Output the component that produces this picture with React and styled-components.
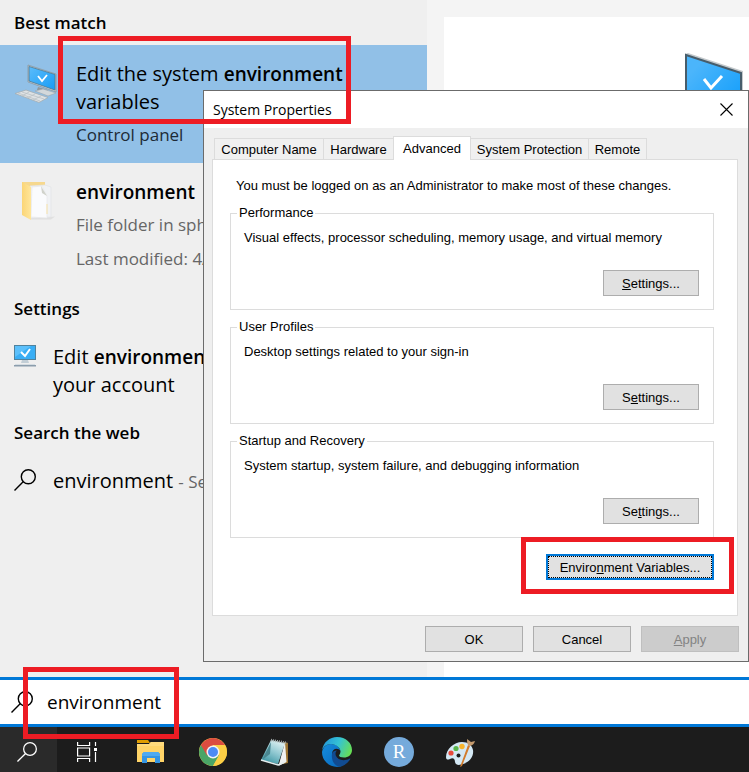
import React, { useState } from 'react'
import styled, { createGlobalStyle } from 'styled-components'

const ui = `'Open Sans', 'Noto Sans', sans-serif`
const classic = `'Liberation Sans', Arial, sans-serif`

const GlobalStyle = createGlobalStyle`
    * {
        box-sizing: border-box;
    }

    body {
        margin: 0;
        background: #efefef;
        color: #000;
        font-family: ${ui};
    }
`

const Screen = styled.div`
    position: relative;
    display: flex;
    flex-direction: column;
    min-height: 100vh;
    overflow: hidden;
`

const Flyout = styled.main`
    flex: 1;
    display: grid;
    grid-template-columns: 427px 1fr;
`

const Results = styled.section`
    padding-top: 1px;
    background: #efefef;
`

const Preview = styled.aside`
    display: flex;
    padding: 17px 0 0 17px;
    background: #f4f4f4;
`

const PreviewCard = styled.div`
    flex: 1;
    display: flex;
    justify-content: flex-end;
    padding: 35px 4px 0 0;
    background: #fff;
`

const Heading = styled.h2`
    margin: 0;
    padding-left: 14px;
    font-size: 17px;
    font-weight: 600;
    line-height: 44px;
`

const Result = styled.a`
    display: flex;
    gap: ${props => props.$large ? 18 : 17}px;
    padding: ${props => props.$large ? '15px 60px 11px 14px' : '12px 60px 12px 14px'};
    background: ${props => props.$selected ? '#91c0e7' : 'transparent'};
    color: #000;
    text-decoration: none;
`

const ResultIcon = styled.span`
    flex: none;
    display: flex;
    justify-content: center;
    align-items: flex-start;
    width: ${props => props.$large ? 44 : 22}px;
    padding-top: ${props => props.$large ? 4 : 2}px;
`

const ResultTitle = styled.div`
    font-size: 20px;
    line-height: 28px;

    b {
        font-size: 19px;
        font-weight: 600;
    }
`

const ResultMeta = styled.div`
    font-size: 17px;
    line-height: 34px;
    color: ${props => props.$strong ? '#1d2a35' : '#666'};

    ${ResultTitle} + & {
        margin-top: 2px;
    }
`

const Muted = styled.span`
    font-size: 17px;
    color: #666;
`

const Dialog = styled.section`
    position: absolute;
    top: 90px;
    left: 203px;
    right: 0;
    border: 1px solid #6b6b6b;
    background: #efefef;
    font-family: ${classic};
    font-size: 13px;
    line-height: 16px;
`

const TitleBar = styled.header`
    display: flex;
    align-items: center;
    justify-content: space-between;
    height: 37px;
    padding: 0 15px 0 9px;
    background: #fff;
`

const DialogTitle = styled.h1`
    margin: 0;
    font-family: ${ui};
    font-size: 14px;
    font-weight: 400;
`

const CloseButton = styled.button`
    display: flex;
    padding: 0;
    border: 0;
    background: none;
`

const DialogBody = styled.div`
    padding: 8px 9px 9px 8px;
`

const Tabs = styled.div`
    display: flex;
    align-items: flex-end;
    height: 23px;
    padding-left: 2px;
`

const Tab = styled.button`
    position: relative;
    flex: 0 0 ${props => props.$width}px;
    height: ${props => props.$active ? 24 : 21}px;
    margin: 0 0 ${props => props.$active ? -1 : 0}px -1px;
    padding: ${props => props.$active ? 0 : 2}px 0 0;
    border: 1px solid #dcdcdc;
    border-bottom: 0;
    background: ${props => props.$active ? '#fff' : '#f0f0f0'};
    font: inherit;
    color: #000;
    white-space: nowrap;

    &:first-child {
        margin-left: 0;
    }
`

const Panel = styled.div`
    margin-right: 1px;
    padding: 18px 23px 35px 17px;
    border: 1px solid #dcdcdc;
    background: #fff;
`

const Note = styled.p`
    margin: 0 0 11px 6px;
    white-space: nowrap;
`

const Group = styled.fieldset`
    min-width: 0;
    margin: 0 0 9px;
    padding: 9px 14px 13px 13px;
    border: 1px solid #dcdcdc;

    &:last-of-type {
        margin-bottom: 16px;
    }
`

const Legend = styled.legend`
    margin-left: -7px;
    padding: 0 2px;
`

const GroupText = styled.p`
    margin: 0 0 24px;
    white-space: nowrap;
`

const ButtonRow = styled.div`
    display: flex;
    justify-content: flex-end;
    gap: 10px;
`

const Footer = styled(ButtonRow)`
    padding-top: 10px;
`

const Button = styled.button`
    width: ${props => props.$width}px;
    height: 26px;
    padding: 2px 0 0;
    border: 1px solid #adadad;
    background: #e1e1e1;
    font: inherit;
    color: #000;

    &:disabled {
        border-color: #bfbfbf;
        background: #ccc;
        color: #838383;
    }
`

const DefaultButton = styled(Button)`
    border: 2px solid #0078d7;
    outline: 1px dotted #000;
    outline-offset: -3px;
`

const SearchBar = styled.label`
    display: flex;
    align-items: center;
    gap: 14px;
    height: 50px;
    padding-left: 11px;
    border: solid #0078d7;
    border-width: 3px 0;
    background: #fff;
`

const SearchInput = styled.input`
    flex: 1;
    min-width: 0;
    padding: 0;
    border: 0;
    outline: 0;
    background: none;
    font-family: ${ui};
    font-size: 19px;
    color: #000;
`

const Taskbar = styled.nav`
    display: flex;
    height: 45px;
    background: #1c1c1c;
`

const TaskButton = styled.button`
    display: flex;
    align-items: center;
    justify-content: center;
    width: 62px;
    padding: 4px 0 0;
    border: 0;
    background: transparent;
`

const SearchTaskButton = styled(TaskButton)`
    width: 57px;
    margin-right: 1px;
    padding: 4px 4px 0 0;
    background: #2a2a2a;
`

// red outlines that point out the steps
const Highlight = styled.div`
    position: absolute;
    border: 5px solid #ed1c24;
    pointer-events: none;
`

const ResultHighlight = styled(Highlight)`
    top: 36px;
    left: 58px;
    width: 293px;
    height: 88px;
`

const ButtonHighlight = styled(Highlight)`
    top: 537px;
    right: 15px;
    width: 213px;
    height: 57px;
`

const SearchHighlight = styled(Highlight)`
    bottom: 33px;
    left: 23px;
    width: 156px;
    height: 72px;
`

const SearchIcon = ({ color = '#000', size = 22 }) => (
    <svg width={size} height={size} viewBox='0 0 22 22' fill='none' stroke={color} strokeWidth='1.4'>
        <circle cx='14.3' cy='7.7' r='7' />
        <path d='M9.4 12.6L.5 21.5' />
    </svg>
)

const SystemIcon = () => (
    <svg width='44' height='42' viewBox='0 0 44 42'>
        <defs>
            <linearGradient id='sysBlue' x1='0' y1='0' x2='1' y2='1'>
                <stop offset='0' stopColor='#5cbcfb' />
                <stop offset='1' stopColor='#169cf5' />
            </linearGradient>
        </defs>
        <path d='M24 23l10 3-1 4-10-4z' fill='#8f979c' />
        <path d='M21 27l8-2 13 4-8 3z' fill='#d3d8db' stroke='#9aa5ac' strokeWidth='.6' />
        <path d='M14 1l28 9v18L14 18z' fill='#c3cbd0' stroke='#8b989f' strokeWidth='.8' />
        <path d='M15 2.500l26 8V26L15 17z' fill='url(#sysBlue)' stroke='#4b7a96' strokeWidth='.8' />
        <path d='M24 12l4 5 5-6' fill='none' stroke='#fff' strokeWidth='1.800' />
        <path d='M1 29.500l11-3.500 22 7.500-9 5z' fill='#dfe2e4' stroke='#a4adb2' strokeWidth='.8' />
        <path d='M4 29l22 8M8 28l22 7M8 32l7-4M13 34l8-4M19 36l8-4' stroke='#b6bec3' strokeWidth='.7' />
    </svg>
)

const FolderPageIcon = () => (
    <svg width='44' height='42' viewBox='0 0 44 42'>
        <defs>
            <linearGradient id='folderSide' x1='0' y1='0' x2='1' y2='0'>
                <stop offset='0' stopColor='#fbd576' />
                <stop offset='1' stopColor='#ffe69b' />
            </linearGradient>
        </defs>
        <path d='M16 36l20-1 5-.500-4 3H16z' fill='#e0e0e0' />
        <path d='M8 0h23v5H9z' fill='#f6d88e' />
        <path d='M16 4l15-1 6 2v30l-21 1z' fill='#f0f2f4' stroke='#e2e4e6' strokeWidth='.7' />
        <path d='M18 5l10-1 5 10v22l-16-1z' fill='#fafbfd' stroke='#e6e8ea' strokeWidth='.7' />
        <path d='M27 4l6 10-5-3z' fill='#d0d2cb' />
        <path d='M33 22v10' stroke='#f8e3aa' strokeWidth='1' />
        <path d='M8 0l9 5v33L8 33z' fill='url(#folderSide)' />
    </svg>
)

const MonitorIcon = () => (
    <svg width='22' height='22' viewBox='0 0 22 22'>
        <path d='M0 0h22v15H0z' fill='#50829d' />
        <path d='M1 1h20v13H1z' fill='#39aef5' />
        <path d='M1 1h16L1 12z' fill='#5cc0fb' />
        <path d='M7 7l4 4 5-7' fill='none' stroke='#fff' strokeWidth='2' />
        <path d='M8 15h6l1 3H7z' fill='#c2ced6' />
        <path d='M1 19h20v1H1z' fill='#d4dce2' />
        <path d='M0 20h22v1.500H0z' fill='#8b9dac' />
    </svg>
)

const PreviewIcon = () => (
    <svg width='60' height='60' viewBox='0 0 60 60'>
        <defs>
            <linearGradient id='previewBlue' x1='0' y1='0' x2='1' y2='1'>
                <stop offset='.2' stopColor='#4bb5fb' />
                <stop offset='.8' stopColor='#1ca2fb' />
            </linearGradient>
        </defs>
        <path d='M0 2l3-1 55 18v41H0z' fill='#c4c9cc' />
        <path d='M1 3l55 18v39H1z' fill='url(#previewBlue)' stroke='#475d6b' strokeWidth='2' />
        <path d='M19 27l7 9L37 24' fill='none' stroke='#fff' strokeWidth='3' />
    </svg>
)

const CloseIcon = () => (
    <svg width='13' height='13' viewBox='0 0 13 13' stroke='#000' strokeWidth='1.1'>
        <path d='M.5.5l12 12M12.500.5l-12 12' />
    </svg>
)

const TaskViewIcon = () => (
    <svg width='24' height='20' viewBox='0 0 24 20' fill='none' stroke='#fff' strokeWidth='1.2'>
        <path d='M.6 0v3.500h12V0M.6 20v-3.500h12V20M.6 6h12v8H.6zM18.500 0v4M18.500 10v10' />
        <path d='M17 6h3v3h-3z' fill='#fff' stroke='none' />
    </svg>
)

const ExplorerIcon = () => (
    <svg width='28' height='24' viewBox='0 0 28 24'>
        <path d='M0 0h11l2 3H0z' fill='#e09d00' />
        <path d='M0 4h12l2-2h13v20H0z' fill='#ffd467' />
        <path d='M0 4h12l2-2h13v4H0z' fill='#ffdb7c' />
        <path d='M5 23v-9l2-2h14l2 2v9h-5v-5h-8v5z' fill='#3595e3' />
        <path d='M7 12h14l2 2v2H5v-2z' fill='#4faaf0' />
    </svg>
)

const ChromeIcon = () => (
    <svg width='28' height='28' viewBox='0 0 28 28'>
        <circle cx='14' cy='14' r='14' fill='#fbcf45' />
        <path d='M14 14L1.900 7A14 14 0 0 0 14 28l6-10.500z' fill='#4aa567' />
        <path d='M1.900 7A14 14 0 0 1 26.100 7H14L8 17.500z' fill='#db4c40' />
        <path d='M14 7h12.100A14 14 0 0 1 14 28l6-10.500z' fill='#fccf45' />
        <circle cx='14' cy='14' r='6.500' fill='#f4f4f4' />
        <circle cx='14' cy='14' r='5' fill='#4c8bf5' />
    </svg>
)

const NotepadIcon = () => (
    <svg width='30' height='28' viewBox='0 0 30 28'>
        <defs>
            <linearGradient id='notePage' x1='.8' y1='0' x2='.3' y2='1'>
                <stop offset='0' stopColor='#e7f5f6' />
                <stop offset='.5' stopColor='#92c9d2' />
                <stop offset='1' stopColor='#3c95a3' />
            </linearGradient>
        </defs>
        <path d='M24 4l4 1v20l-5 1z' fill='#9b7431' />
        <path d='M25 4l1.500 20-8 4z' fill='#f0f2f2' />
        <path d='M11 2l14 3-7 21L1 22z' fill='url(#notePage)' />
        <path d='M11 4l-1 12-8 6z' fill='#4a8791' />
        <path d='M1 22l17 5 7-3' fill='none' stroke='#e4edef' strokeWidth='1.500' />
        <path d='M11 2l16 3' stroke='#a5adad' strokeWidth='2.500' strokeDasharray='1 1' />
    </svg>
)

const EdgeIcon = () => (
    <svg width='30' height='30' viewBox='0 0 30 30'>
        <defs>
            <linearGradient id='edgeTop' x1='0' y1='.3' x2='1' y2='.6'>
                <stop offset='0' stopColor='#2397da' />
                <stop offset='.5' stopColor='#35c2d5' />
                <stop offset='1' stopColor='#67df54' />
            </linearGradient>
            <linearGradient id='edgeLeft' x1='0' y1='0' x2='1' y2='1'>
                <stop offset='0' stopColor='#168ddd' />
                <stop offset='1' stopColor='#0868bd' />
            </linearGradient>
        </defs>
        <path d='M0 15C1 10 4.500 7 9 7c5 0 9 3.500 9.500 7-1.500-2.500-5-3-7-1-3 3-1 11 8 16.300-1.500.5-3 .7-4.500.7A15 15 0 0 1 0 15z' fill='url(#edgeLeft)' />
        <path d='M0 14C1 5 8 0 15 0c9 0 15 6 15 13 0 5-4 7.500-8 7.500-3 0-5-1-5-2 0-.6 1.500-1.500 1.500-4C18.500 11 14 7 9 7c-4.500 0-8 3-9 7z' fill='url(#edgeTop)' />
        <path d='M10 17c-1 5 2 13 8.500 12.600 3.500-.8 7.500-3.600 9.700-7.300.4-.6-.1-1-.8-.6-6 3-12 1-13.500-3-.8-2-.3-4 1-5.200C12 13.500 10.300 15 10 17z' fill='#114b91' />
    </svg>
)

const RIcon = () => (
    <svg width='30' height='30' viewBox='0 0 30 30'>
        <circle cx='15' cy='15' r='15' fill='#75aadb' />
        <text x='15' y='21' textAnchor='middle' fill='#fff' fontFamily='Liberation Serif, serif' fontSize='19'>R</text>
    </svg>
)

const PaintIcon = () => (
    <svg width='30' height='30' viewBox='0 0 30 30'>
        <path d='M16 5C8 5 0 12 0 20c0 3 2 3 4 2 3-2 5 0 5 3 1 4 5 3 8 2 7-2 11-8 10-14-1-5-5-8-11-8z' fill='#d4e8f4' />
        <circle cx='12.500' cy='18.500' r='2' fill='#1c1c1c' />
        <circle cx='5' cy='16' r='2.600' fill='#e64a3c' />
        <circle cx='10' cy='11.500' r='2.600' fill='#59b64b' />
        <circle cx='16' cy='9.500' r='2.700' fill='#f7b42c' />
        <path d='M22 8l2 1-8 20-2 1z' fill='#d27b2b' />
        <path d='M21 2l4 3 4-1c-1 3-2 4-5 5-3-1-3-4-3-7z' fill='#c49a6d' />
    </svg>
)

const groups = [
    { name: 'Performance', text: 'Visual effects, processor scheduling, memory usage, and virtual memory', label: <><u>S</u>ettings...</> },
    { name: 'User Profiles', text: 'Desktop settings related to your sign-in', label: <>S<u>e</u>ttings...</> },
    { name: 'Startup and Recovery', text: 'System startup, system failure, and debugging information', label: <>Se<u>t</u>tings...</> }
]

const tabs = [
    { name: 'Computer Name', width: 110 },
    { name: 'Hardware', width: 71 },
    { name: 'Advanced', width: 78 },
    { name: 'System Protection', width: 119 },
    { name: 'Remote', width: 59 }
]

const apps = [
    { name: 'Task View', Icon: TaskViewIcon },
    { name: 'File Explorer', Icon: ExplorerIcon },
    { name: 'Chrome', Icon: ChromeIcon },
    { name: 'Notepad', Icon: NotepadIcon },
    { name: 'Edge', Icon: EdgeIcon },
    { name: 'R', Icon: RIcon },
    { name: 'Paint', Icon: PaintIcon }
]

const SearchResults = () => (
    <Results>
        <Heading>Best match</Heading>
        <Result href='#system' $large $selected>
            <ResultIcon $large><SystemIcon /></ResultIcon>
            <div>
                <ResultTitle>Edit the system <b>environment</b> variables</ResultTitle>
                <ResultMeta $strong>Control panel</ResultMeta>
            </div>
        </Result>
        <Result href='#folder' $large>
            <ResultIcon $large><FolderPageIcon /></ResultIcon>
            <div>
                <ResultTitle><b>environment</b></ResultTitle>
                <ResultMeta>File folder in sph</ResultMeta>
                <ResultMeta>Last modified: 4/</ResultMeta>
            </div>
        </Result>
        <Heading>Settings</Heading>
        <Result href='#account'>
            <ResultIcon><MonitorIcon /></ResultIcon>
            <ResultTitle>Edit <b>environmen</b><br />your account</ResultTitle>
        </Result>
        <Heading>Search the web</Heading>
        <Result href='#web'>
            <ResultIcon><SearchIcon /></ResultIcon>
            <ResultTitle>environment <Muted>- Se</Muted></ResultTitle>
        </Result>
    </Results>
)

const SystemProperties = () => {
    const [active, setActive] = useState('Advanced')

    return (
        <Dialog role='dialog' aria-labelledby='dialog-title'>
            <TitleBar>
                <DialogTitle id='dialog-title'>System Properties</DialogTitle>
                <CloseButton aria-label='Close'><CloseIcon /></CloseButton>
            </TitleBar>
            <DialogBody>
                <Tabs role='tablist'>
                    {tabs.map(tab => (
                        <Tab
                            key={tab.name}
                            role='tab'
                            aria-selected={active === tab.name}
                            $active={active === tab.name}
                            $width={tab.width}
                            onClick={() => setActive(tab.name)}>
                            {tab.name}
                        </Tab>
                    ))}
                </Tabs>
                <Panel role='tabpanel'>
                    <Note>You must be logged on as an Administrator to make most of these changes.</Note>
                    {groups.map(group => (
                        <Group key={group.name}>
                            <Legend>{group.name}</Legend>
                            <GroupText>{group.text}</GroupText>
                            <ButtonRow>
                                <Button $width={96}>{group.label}</Button>
                            </ButtonRow>
                        </Group>
                    ))}
                    <ButtonRow>
                        <DefaultButton $width={168}>Enviro<u>n</u>ment Variables...</DefaultButton>
                    </ButtonRow>
                </Panel>
                <Footer>
                    <Button $width={98}>OK</Button>
                    <Button $width={98}>Cancel</Button>
                    <Button $width={98} disabled><u>A</u>pply</Button>
                </Footer>
            </DialogBody>
        </Dialog>
    )
}

const App = () => (
    <Screen>
        <GlobalStyle />
        <Flyout>
            <SearchResults />
            <Preview>
                <PreviewCard><PreviewIcon /></PreviewCard>
            </Preview>
        </Flyout>
        <SearchBar>
            <SearchIcon />
            <SearchInput aria-label='Search' defaultValue='environment' />
        </SearchBar>
        <Taskbar>
            <SearchTaskButton aria-label='Search'><SearchIcon color='#fff' size={20} /></SearchTaskButton>
            {apps.map(({ name, Icon }) => (
                <TaskButton key={name} aria-label={name}><Icon /></TaskButton>
            ))}
        </Taskbar>
        <SystemProperties />
        <ResultHighlight />
        <ButtonHighlight />
        <SearchHighlight />
    </Screen>
)

export default App
